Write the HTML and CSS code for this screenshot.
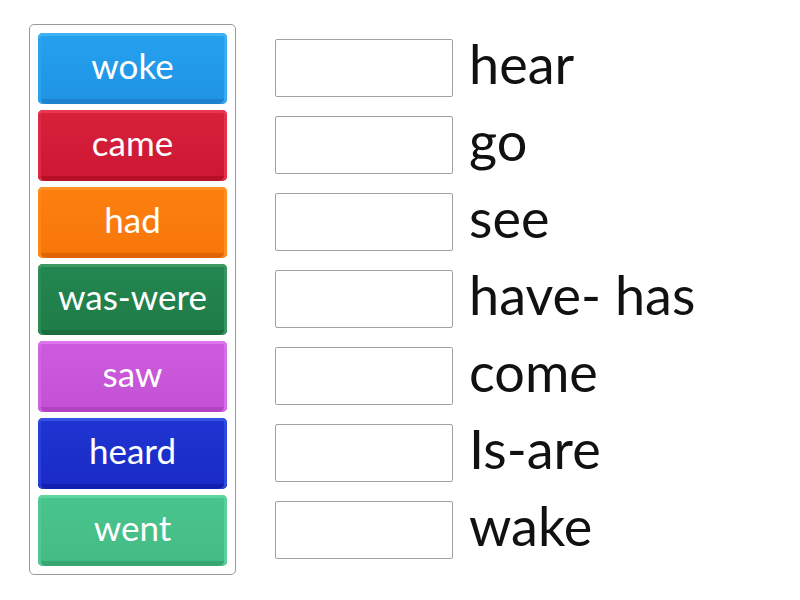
FILE: index.html
```html
<!DOCTYPE html>
<html>
<head>
<meta charset="utf-8">
<link rel="stylesheet" href="styles.css">
</head>
<body>
<div class="page">
  <div class="bank">
    <div class="tile c-blue">woke</div>
    <div class="tile c-red">came</div>
    <div class="tile c-orange">had</div>
    <div class="tile c-green">was-were</div>
    <div class="tile c-pink">saw</div>
    <div class="tile c-navy">heard</div>
    <div class="tile c-mint">went</div>
  </div>
  <div class="targets">
    <div class="row"><div class="slot"></div><div class="word">hear</div></div>
    <div class="row"><div class="slot"></div><div class="word">go</div></div>
    <div class="row"><div class="slot"></div><div class="word">see</div></div>
    <div class="row"><div class="slot"></div><div class="word">have- has</div></div>
    <div class="row"><div class="slot"></div><div class="word">come</div></div>
    <div class="row"><div class="slot"></div><div class="word">Is-are</div></div>
    <div class="row"><div class="slot"></div><div class="word">wake</div></div>
  </div>
</div>
</body>
</html>
```
FILE: styles.css
```css
html, body {
  margin: 0;
  padding: 0;
  background: #ffffff;
  font-family: "Lato", "Noto Sans", sans-serif;
}
.page {
  display: flex;
  align-items: flex-start;
  padding: 24px 0 0 29px;
}
.bank {
  width: 189px;
  padding: 8px;
  border: 1px solid #9a9a9a;
  border-radius: 5px;
  display: flex;
  flex-direction: column;
  gap: 6px;
}
.tile {
  height: 71px;
  border-radius: 5px;
  color: #ffffff;
  font-size: 35px;
  line-height: 1;
  display: flex;
  align-items: center;
  justify-content: center;
  padding-bottom: 6px;
  box-sizing: border-box;
  white-space: nowrap;
}
.c-blue {
  background: linear-gradient(#25a1f0, #1f93e3);
  box-shadow: inset 0 3px 0 #3db2f7, inset -3px 0 0 #37abf3, inset 3px 0 0 #2aa3ef, inset 0 -5px 0 #1b82cd;
}
.c-red {
  background: linear-gradient(#d8213b, #cd1733);
  box-shadow: inset 0 3px 0 #ea3650, inset -3px 0 0 #e6314b, inset 3px 0 0 #dc2a43, inset 0 -5px 0 #b80f29;
}
.c-orange {
  background: linear-gradient(#fd800f, #f7760a);
  box-shadow: inset 0 3px 0 #ff9124, inset -3px 0 0 #ff8e20, inset 3px 0 0 #ff8616, inset 0 -5px 0 #e06506;
}
.c-green {
  background: linear-gradient(#238650, #1f7c47);
  box-shadow: inset 0 3px 0 #3a9a62, inset -3px 0 0 #359660, inset 3px 0 0 #2b8b55, inset 0 -5px 0 #1a6d3d;
}
.c-pink {
  background: linear-gradient(#cc5cdd, #c451d5);
  box-shadow: inset 0 3px 0 #dd73ee, inset -3px 0 0 #d86deb, inset 3px 0 0 #d163e3, inset 0 -5px 0 #b145c1;
}
.c-navy {
  background: linear-gradient(#1f35d1, #1a2ac6);
  box-shadow: inset 0 3px 0 #3452e4, inset -3px 0 0 #2f4ae0, inset 3px 0 0 #273fd8, inset 0 -5px 0 #1220b0;
}
.c-mint {
  background: linear-gradient(#4ac48e, #43bb85);
  box-shadow: inset 0 3px 0 #5fd5a0, inset -3px 0 0 #5ad19b, inset 3px 0 0 #50c893, inset 0 -5px 0 #36a673;
}
.targets {
  margin-left: 39px;
  padding-top: 15px;
  display: flex;
  flex-direction: column;
  gap: 19px;
}
.row {
  display: flex;
  align-items: center;
  height: 58px;
}
.slot {
  width: 176px;
  height: 56px;
  border: 1px solid #a0a0a0;
  border-radius: 2px;
}
.word {
  margin-left: 16px;
  font-size: 54px;
  line-height: 1;
  color: #111111;
  margin-top: -8px;
  white-space: nowrap;
}
```
